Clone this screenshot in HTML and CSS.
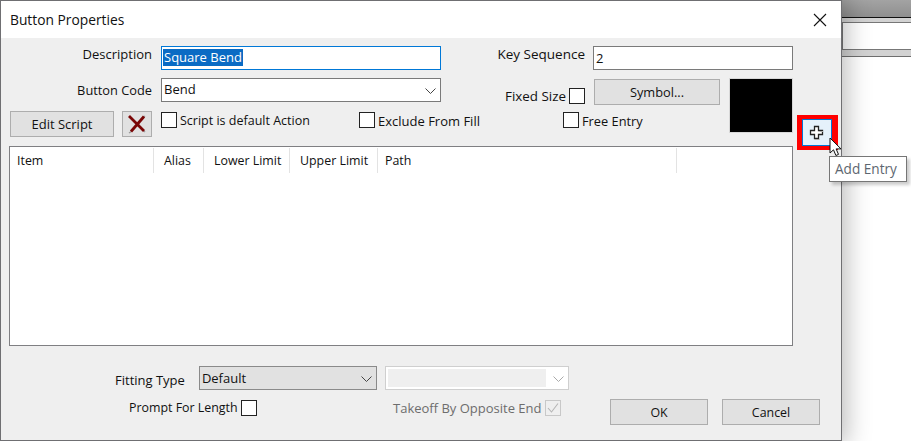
FILE: index.html
```html
<!DOCTYPE html>
<html lang="en">
<head>
<meta charset="utf-8">
<title>Button Properties</title>
<link rel="stylesheet" href="styles.css">
</head>
<body>
<div class="screen">
  <section class="dialog">
    <header class="titlebar">
      <span class="title">Button Properties</span>
      <svg class="close" width="14" height="14" viewBox="0 0 14 14"><path d="M1 1L13 13M13 1L1 13" stroke="#111" stroke-width="1.1" fill="none"/></svg>
    </header>
    <div class="content">
      <div class="top-grid">
        <span class="label desc-label">Description</span>
        <div class="field focus desc-field"><span class="selected">Square Bend</span></div>
        <span class="label key-label">Key Sequence</span>
        <div class="field key-field">2</div>

        <span class="label code-label">Button Code</span>
        <div class="field code-field">Bend
          <svg class="chev" width="11" height="6" viewBox="0 0 11 6"><path d="M.5.5l5 5 5-5" stroke="#444" fill="none"/></svg>
        </div>
        <div class="fixed-size"><span class="label">Fixed Size</span><span class="check"></span></div>
        <button class="btn symbol">Symbol...</button>
        <div class="swatch"></div>

        <div class="script-btns">
          <button class="btn edit">Edit Script</button>
          <button class="btn del">
            <svg width="22" height="20" viewBox="0 0 22 20"><path d="M4 3L19 18M3 19L6 17M19 2L15 5" stroke="#9a9a9a" stroke-width="1.4" fill="none"/><path d="M3 2L18 17M18 2.500L5 17.500" stroke="#7a0606" stroke-width="2.800" fill="none"/></svg>
          </button>
        </div>
        <div class="options">
          <label class="opt opt-script"><span class="check"></span><span class="opt-text">Script is default Action</span></label>
          <label class="opt opt-exclude"><span class="check"></span><span class="opt-text wide">Exclude From Fill</span></label>
          <label class="opt"><span class="check"></span><span class="opt-text free">Free Entry</span></label>
        </div>
      </div>

      <div class="add-slot">
        <div class="add-outline">
          <button class="add-btn">
            <svg width="16" height="16" viewBox="0 0 16 16"><path d="M5.500 1.500h4v4h4v4h-4v4h-4v-4h-4v-4h4z" fill="#fff" stroke="#222" stroke-width="1.300"/><path d="M10.500 6.500h3.500M10.500 14.500H6" stroke="#aaa" fill="none"/></svg>
          </button>
        </div>
        <svg class="cursor" width="14" height="20" viewBox="0 0 14 20"><path d="M1 1v15l3.500-3.200 2.400 5.700 2.600-1.100-2.400-5.500H12z" fill="#fff" stroke="#111" stroke-width="1"/></svg>
        <div class="tooltip">Add Entry</div>
      </div>

      <div class="table">
        <div class="thead">
          <span class="th th-item">Item</span>
          <span class="th th-alias">Alias</span>
          <span class="th th-lower">Lower Limit</span>
          <span class="th th-upper">Upper Limit</span>
          <span class="th th-path">Path</span>
        </div>
      </div>

      <div class="bottom">
        <div class="bottom-left">
          <div class="b-row">
            <span class="label fit-label">Fitting Type</span>
            <div class="field dropdown fit-select">Default
              <svg class="chev" width="11" height="6" viewBox="0 0 11 6"><path d="M.5.5l5 5 5-5" stroke="#444" fill="none"/></svg>
            </div>
            <div class="field disabled">
              <span class="disabled-inner"></span>
              <svg class="chev" width="11" height="6" viewBox="0 0 11 6"><path d="M.5.5l5 5 5-5" stroke="#aaa" fill="none"/></svg>
            </div>
          </div>
          <div class="b-row second">
            <div class="prompt"><span class="label">Prompt For Length</span><span class="check"></span></div>
            <div class="takeoff">
              <span class="label muted">Takeoff By Opposite End</span>
              <span class="check checked-off"><svg width="14" height="14" viewBox="0 0 14 14"><path d="M2 7l3.500 4L12 2.500" stroke="#b5b5b5" stroke-width="1.100" fill="none"/></svg></span>
            </div>
          </div>
        </div>
        <div class="actions">
          <button class="btn action">OK</button>
          <button class="btn action">Cancel</button>
        </div>
      </div>
    </div>
  </section>
  <aside class="behind">
    <div class="behind-top"></div>
    <div class="behind-strip"><div class="behind-box"></div></div>
    <div class="behind-body"></div>
  </aside>
</div>
</body>
</html>
```

FILE: styles.css
```css
* { box-sizing: border-box; }
html, body { margin: 0; padding: 0; }
body { width: 911px; height: 441px; overflow: hidden; background: #fff; font-family: "Open Sans", "Noto Sans", sans-serif; font-size: 12.4px; color: #111; }
.screen { display: flex; width: 911px; height: 441px; }

.btn { font: inherit; color: #111; background: #e1e1e1; border: 1px solid #adadad; padding: 0; margin: 0; }

.dialog { position: relative; z-index: 2; flex: 0 0 842px; height: 441px; border: 1px solid #6f6f72; background: #efefef; box-shadow: 0 0 24px 4px rgba(0,0,0,.28); display: flex; flex-direction: column; }
.titlebar { flex: 0 0 37px; background: #fff; display: flex; align-items: center; justify-content: space-between; padding: 0 14px 0 9px; }
.title { font-size: 13.8px; }
.close { display: block; }

.content { position: relative; flex: 1; padding: 8px 0 0 9px; }
.top-grid { display: grid; grid-template-columns: 151px 280px 152px 136px 64px; grid-template-rows: 24px 35px 32px; }

.label { white-space: nowrap; line-height: 16px; }
.desc-label { grid-column: 1; grid-row: 1; justify-self: end; margin-right: 9px; font-size: 13px; }
.desc-field { grid-column: 2; grid-row: 1; }
.key-label { grid-column: 3; grid-row: 1; justify-self: end; margin-right: 8px; font-size: 13.5px; }
.key-field { grid-column: 4 / 6; grid-row: 1; }
.code-label { grid-column: 1; grid-row: 2; justify-self: end; margin: 12px 9px 0 0; font-size: 12.8px; }
.code-field { grid-column: 2; grid-row: 2; margin-top: 8px; }
.fixed-size { grid-column: 3; grid-row: 2; display: flex; justify-content: flex-end; align-items: center; gap: 3px; margin: 18px 8px 0 0; height: 16px; font-size: 13.4px; }
.symbol { grid-column: 4; grid-row: 2; margin: 9px 9px 0 1px; height: 26px; font-size: 12.8px; }
.swatch { grid-column: 5; grid-row: 2 / 4; margin-top: 8px; height: 55px; background: #000; border: 1px solid #d8d8d8; }

.script-btns { grid-column: 1; grid-row: 3; display: flex; gap: 8px; margin-top: 6px; height: 26px; }
.options { grid-column: 2 / 5; grid-row: 3; display: flex; margin-top: 7px; height: 16px; }
.opt { display: flex; align-items: flex-start; gap: 3px; white-space: nowrap; font-size: 12.5px; }
.opt-text { line-height: 16px; padding-top: 1px; }
.opt-script { width: 198px; }
.opt-exclude { width: 204px; }
.wide { font-size: 13px; }
.free { font-size: 12.8px; }

.field { position: relative; height: 24px; border: 1px solid #7a7a7a; background: #fff; padding: 2px 2px 0 2px; line-height: 17px; font-size: 13px; }
.field.focus { border-color: #0078d7; padding-left: 1px; }
.selected { display: block; width: fit-content; background: #0a6bc4; color: #fff; height: 17px; line-height: 17px; padding: 0 1px; }
.key-field { padding-top: 3px; }
.chev { position: absolute; right: 4px; top: 9px; }

.check { flex: none; display: inline-block; width: 16px; height: 16px; border: 1px solid #222; background: #fff; }
.checked-off { border-color: #c8c8c8; background: #efefef; }
.checked-off svg { display: block; }

.edit { width: 104px; height: 26px; font-size: 13px; }
.del { width: 30px; height: 26px; display: flex; align-items: center; justify-content: center; }

.add-slot { position: absolute; left: 796px; top: 77px; width: 41px; height: 35px; }
.add-outline { width: 41px; height: 35px; border: solid #f00; border-width: 4px 6px 4px 5px; }
.add-btn { display: flex; align-items: center; justify-content: center; width: 30px; height: 27px; padding: 0; background: #e5f1fb; border: 1px solid #0078d7; }
.cursor { position: absolute; left: 32px; top: 22px; z-index: 4; }
.tooltip { position: absolute; left: 32px; top: 41px; z-index: 3; width: 78px; height: 26px; padding-left: 5px; line-height: 24px; font-size: 13.6px; white-space: nowrap; color: #5d6670; background: #fff; border: 1px solid #767676; box-shadow: 3px 3px 3px rgba(0,0,0,.2); }

.table { margin: 9px 0 0 -1px; width: 784px; height: 200px; background: #fff; border: 1px solid #7f7f82; }
.thead { display: flex; height: 26px; }
.th { flex: none; height: 25px; line-height: 26px; margin-top: 1px; padding-left: 7px; border-right: 1px solid #e3e3e3; white-space: nowrap; }
.th-item { width: 144px; }
.th-alias { width: 50px; padding-left: 10px; }
.th-lower { width: 86px; padding-left: 10px; }
.th-upper { width: 88px; padding-left: 10px; }
.th-path { width: 299px; }

.bottom { display: flex; margin-top: 20px; }
.bottom-left { width: 600px; }
.b-row { display: flex; align-items: flex-start; }
.fit-label { margin: 6px 14px 0 105px; font-size: 13px; }
.dropdown { background: #e1e1e1; width: 178px; border-color: #8a8a8a; padding-top: 3px; }
.disabled { width: 184px; margin-left: 8px; border-color: #cfcfcf; padding: 2px; }
.disabled-inner { display: block; width: 158px; height: 18px; background: #efefef; }
.second { margin-top: 10px; }
.prompt { display: flex; align-items: center; gap: 3px; margin-left: 119px; width: 264px; }
.takeoff { display: flex; align-items: center; gap: 3px; }
.muted { color: #6d6d6d; font-size: 13px; }
.actions { display: flex; gap: 14px; margin-top: 33px; }
.action { width: 98px; height: 26px; }

.behind { flex: 1; display: flex; flex-direction: column; height: 441px; background: #fff; }
.behind-top { height: 18px; background: linear-gradient(#a3a3a3, #8f8f8f); border-bottom: 1px solid #111; }
.behind-strip { height: 39px; padding: 4px 0 5px; background: #d2d2d2; border-bottom: 1px solid #6e6e6e; }
.behind-box { height: 28px; background: #fff; border: 1px solid #777; border-right: 0; }
.behind-body { flex: 1; background: #fff; }
```
